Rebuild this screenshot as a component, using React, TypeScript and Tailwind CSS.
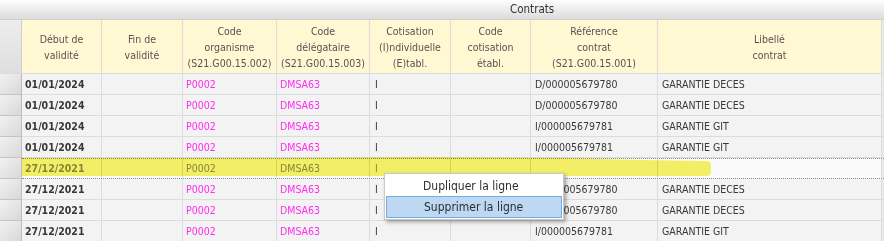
import React from "react";

const cols = "grid grid-cols-[22px_80px_81px_94px_93px_81px_80px_127px_224px_1fr]";

type Row = {
  debut: string;
  org: string;
  deleg: string;
  cotis: string;
  ref: string;
  lib: string;
  ghost?: boolean;
};

const rows: Row[] = [
  { debut: "01/01/2024", org: "P0002", deleg: "DMSA63", cotis: "I", ref: "D/000005679780", lib: "GARANTIE DECES" },
  { debut: "01/01/2024", org: "P0002", deleg: "DMSA63", cotis: "I", ref: "D/000005679780", lib: "GARANTIE DECES" },
  { debut: "01/01/2024", org: "P0002", deleg: "DMSA63", cotis: "I", ref: "I/000005679781", lib: "GARANTIE GIT" },
  { debut: "01/01/2024", org: "P0002", deleg: "DMSA63", cotis: "I", ref: "I/000005679781", lib: "GARANTIE GIT" },
  { debut: "27/12/2021", org: "P0002", deleg: "DMSA63", cotis: "I", ref: "", lib: "", ghost: true },
  { debut: "27/12/2021", org: "P0002", deleg: "DMSA63", cotis: "I", ref: "D/000005679780", lib: "GARANTIE DECES" },
  { debut: "27/12/2021", org: "P0002", deleg: "DMSA63", cotis: "I", ref: "D/000005679780", lib: "GARANTIE DECES" },
  { debut: "27/12/2021", org: "P0002", deleg: "DMSA63", cotis: "I", ref: "I/000005679781", lib: "GARANTIE GIT" },
];

const headers = [
  ["Début de", "validité"],
  ["Fin de", "validité"],
  ["Code", "organisme", "(S21.G00.15.002)"],
  ["Code", "délégataire", "(S21.G00.15.003)"],
  ["Cotisation", "(I)ndividuelle", "(E)tabl."],
  ["Code", "cotisation", "établ."],
  ["Référence", "contrat", "(S21.G00.15.001)"],
  ["Libellé", "contrat"],
];

function Cell({ children, className = "" }: { children?: React.ReactNode; className?: string }) {
  return (
    <div className={`h-full flex items-center px-[3px] border-r border-[#dcdcdc] whitespace-nowrap overflow-hidden ${className}`}>
      {children}
    </div>
  );
}

function DataRow({ r }: { r: Row }) {
  const txt = r.ghost ? "text-[#8c8c8c]" : "text-[#383838]";
  const mag = r.ghost ? "text-[#8c8c8c]" : "text-[#ff2cf0]";
  return (
    <div className={`${cols} h-[21px] ${r.ghost ? "bg-[#fafafa]" : "bg-[#f3f3f3]"}`}>
      <div className="h-full bg-gradient-to-br from-[#f2f2f2] to-[#d8d8d8] border-b border-[#c4c4c4] border-r border-r-[#bdbdbd]" />
      <div
        className={`col-span-9 grid grid-cols-[80px_81px_94px_93px_81px_80px_127px_224px_1fr] h-full ${
          r.ghost ? "border-y border-dotted border-[#8a8a8a]" : "border-b border-[#dcdcdc]"
        }`}
      >
        <Cell className={`font-bold ${txt}`}>{r.debut}</Cell>
        <Cell />
        <Cell className={mag}>{r.org}</Cell>
        <Cell className={mag}>{r.deleg}</Cell>
        <Cell className={`${txt} pl-[5px]`}>{r.cotis}</Cell>
        <Cell />
        <Cell className={`${txt} pl-[4px]`}>{r.ref}</Cell>
        <Cell className={`${txt} pl-[4px]`}>{r.lib}</Cell>
        <div className="h-full bg-[#e9e9e9]" />
      </div>
    </div>
  );
}

export default function App() {
  return (
    <div
      className="relative w-[884px] h-[241px] overflow-hidden bg-[#f3f3f3] text-[10.5px] leading-none"
      style={{ fontFamily: '"DejaVu Sans Condensed", "DejaVu Sans", sans-serif' }}
    >
      {/* title bar */}
      <div className="h-[20px] bg-gradient-to-b from-[#fdfdfd] to-[#dcdcdc] border-b border-[#cfcfcf] flex items-center pl-[510px] text-[11.5px] text-[#333]">
        Contrats
      </div>

      {/* header */}
      <div className={`${cols} h-[54px] border-b border-[#dcdcdc]`}>
        <div className="h-full bg-gradient-to-b from-[#ededed] to-[#dedede] border-r border-[#cfcfcf]" />
        {headers.map((h, i) => (
          <div
            key={i}
            className="h-full bg-[#fff8d2] border-r border-[#dcdcdc] flex flex-col items-center justify-center text-center text-[#555] leading-[16px]"
          >
            {h.map((l) => (
              <span key={l}>{l}</span>
            ))}
          </div>
        ))}
        <div className="h-full bg-[#e9e9e9]" />
      </div>

      {/* body */}
      <div className="flex flex-col">
        {rows.map((r, i) => (
          <DataRow key={i} r={r} />
        ))}
      </div>

      {/* highlighter stroke over the ghost row */}
      <svg className="absolute left-0 top-0 pointer-events-none mix-blend-multiply" width="884" height="241">
        <path
          d="M22 158 L300 158 L420 157 L560 158 L640 160 L706 161 Q711 161 711 165 L711 173 Q711 176 705 176 L560 176 L380 176 L22 176 Z"
          fill="#f7f468"
        />
      </svg>

      {/* context menu */}
      <div className="absolute left-[384px] top-[173px] w-[180px] bg-white border border-[#c9c9c9] shadow-[2px_2px_4px_rgba(0,0,0,0.35)] py-[1px] text-[12px] text-[#2e2e2e]">
        <div className="h-[21px] flex items-center pl-[38px]">Dupliquer la ligne</div>
        <div className="h-[22px] mx-[1px] flex items-center pl-[37px] bg-[#bcd8f3] border border-[#74ace4]">
          Supprimer la ligne
        </div>
      </div>
    </div>
  );
}
